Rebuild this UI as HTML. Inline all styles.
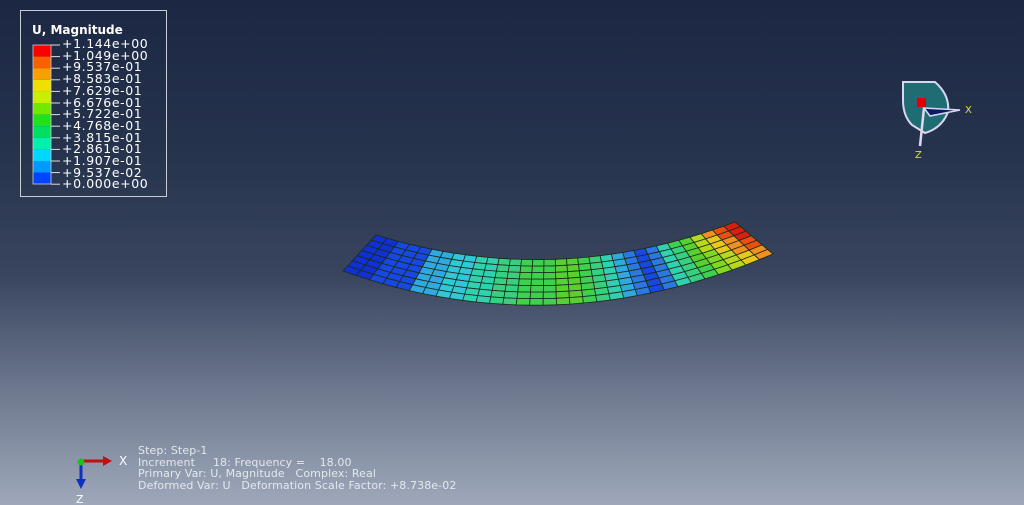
<!DOCTYPE html>
<html><head><meta charset="utf-8"><style>
html,body{margin:0;padding:0;}
body{width:1024px;height:505px;overflow:hidden;position:relative;
background:linear-gradient(180deg,#1c2843 0%,#26334d 30%,#3a4660 55%,#6f7a90 78%,#9fa8ba 100%);
font-family:"DejaVu Sans","Liberation Sans",sans-serif;}
#leg{position:absolute;left:20px;top:10px;width:147px;height:187px;border:1px solid #c8ccd6;box-sizing:border-box;}
#leg .t{position:absolute;left:11px;top:12px;color:#fff;font-size:12px;font-weight:bold;}
.lab{position:absolute;left:62px;color:#fff;font-size:12.5px;line-height:11.7px;letter-spacing:0.6px;}
#info{position:absolute;left:138px;top:445px;color:#e4e8ee;font-size:11px;line-height:11.6px;white-space:pre;letter-spacing:0.1px;}
svg{position:absolute;left:0;top:0;}
</style></head><body>
<svg id="s" width="1024" height="505"></svg>
<div id="leg"><div class="t">U, Magnitude</div></div>
<div class="lab" style="top:38px">+1.144e+00<br>+1.049e+00<br>+9.537e-01<br>+8.583e-01<br>+7.629e-01<br>+6.676e-01<br>+5.722e-01<br>+4.768e-01<br>+3.815e-01<br>+2.861e-01<br>+1.907e-01<br>+9.537e-02<br>+0.000e+00</div>
<div id="info">Step: Step-1
Increment     18: Frequency =    18.00
Primary Var: U, Magnitude   Complex: Real
Deformed Var: U   Deformation Scale Factor: +8.738e-02</div>
<script>
var cols=["#0000ff","#0044ff","#0099ff","#00d8ff","#00f0b0","#00e060","#20e020","#70e800","#c8f000","#f0e000","#f8a000","#f86000","#ff0000"];
var bc=["#1030d0","#1848e0","#2a78e0","#30a8e0","#30c8d8","#30d0b0","#38d080","#40d050","#58d030","#80d820","#b8d820","#e8c820","#f09020","#e85010","#d82010"];
var s=document.getElementById("s"),h="";
var lc=[...cols].reverse();
for(var i=0;i<12;i++){h+='<rect x="33" y="'+(45+i*11.6)+'" width="18" height="11.6" fill="'+lc[i]+'"/>';}
h+='<rect x="33" y="45" width="18" height="139" fill="none" stroke="#ccc" stroke-width="0.8"/>';
for(var i=0;i<=12;i++){h+='<line x1="51" y1="'+(45+i*11.6)+'" x2="60" y2="'+(45+i*11.6)+'" stroke="#ddd" stroke-width="1"/>';}
function q(a,c,b,t){return (1-t)*(1-t)*a+2*(1-t)*t*c+t*t*b;}
function P(u,v){var bx=q(376,555,735,u),by=q(235,290,222,u),fx=q(343,555,773,u),fy=q(271,347,254,u);return [bx+(fx-bx)*v,by+(fy-by)*v];}
var k=[[0,0.02],[0.14,0.05],[0.16,0.2],[0.3,0.35],[0.45,0.52],[0.55,0.55],[0.63,0.4],[0.7,0.12],[0.74,0.05],[0.8,0.35],[0.9,0.7],[1,1]];
function f(u){for(var i=1;i<k.length;i++)if(u<=k[i][0]){var a=k[i-1],b=k[i];return a[1]+(b[1]-a[1])*(u-a[0])/(b[0]-a[0]);}return 1;}
var N=32,M=7;
for(var i=0;i<N;i++)for(var j=0;j<M;j++){
var u0=i/N,u1=(i+1)/N,v0=j/M,v1=(j+1)/M;
var um=(u0+u1)/2,vm=(v0+v1)/2;
var val=f(um);if(um>0.8)val+=(0.5-vm)*0.3*(um-0.8)/0.2;val=Math.max(0,Math.min(1,val));
var c=bc[Math.min(bc.length-1,Math.round(val*(bc.length-1)))];
var p=[P(u0,v0),P(u1,v0),P(u1,v1),P(u0,v1)];
h+='<polygon points="'+p.map(x=>x[0].toFixed(1)+","+x[1].toFixed(1)).join(" ")+'" fill="'+c+'" stroke="#1a2a18" stroke-width="0.8"/>';
}
h+='<path d="M903,82 L935,82 Q950,95 948,112 Q942,128 925,133 L912,125 Q903,116 903,100 Z" fill="#1f6d72" stroke="#d8d8f0" stroke-width="2"/>';
h+='<path d="M924,108 L960,110 L930,116 Z" fill="#101a60" stroke="#d8d8f0" stroke-width="1.5"/>';
h+='<line x1="924" y1="108" x2="920" y2="146" stroke="#e0d8f0" stroke-width="2.5"/>';
h+='<rect x="917" y="98" width="9" height="9" fill="#e00000"/>';
h+='<text x="965" y="113" fill="#e0e040" font-size="10" font-family="DejaVu Sans,sans-serif">X</text>';
h+='<text x="915" y="158" fill="#e0e040" font-size="10" font-family="DejaVu Sans,sans-serif">Z</text>';
h+='<line x1="81" y1="461" x2="104" y2="461" stroke="#c01010" stroke-width="3"/><polygon points="103,456 112,461 103,466" fill="#c01010"/>';
h+='<line x1="81" y1="461" x2="81" y2="480" stroke="#1030c0" stroke-width="3"/><polygon points="76,479 81,489 86,479" fill="#1030c0"/>';
h+='<circle cx="81" cy="462" r="3.5" fill="#20c020"/>';
h+='<text x="119" y="465" fill="#fff" font-size="12" font-family="DejaVu Sans,sans-serif">X</text>';
h+='<text x="76" y="503" fill="#fff" font-size="11" font-family="DejaVu Sans,sans-serif">Z</text>';
s.innerHTML=h;
</script>
</body></html>
